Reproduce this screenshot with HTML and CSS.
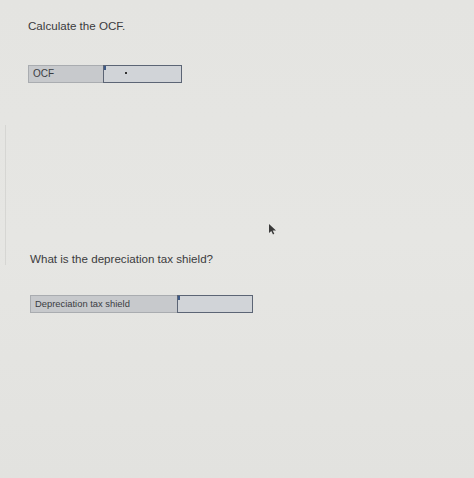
FILE: index.html
```html
<!DOCTYPE html>
<html>
<head>
<meta charset="utf-8">
<link rel="stylesheet" href="styles.css">
</head>
<body>
<div class="page">
  <div class="edge"></div>
  <section class="q q1">
    <p class="prompt">Calculate the OCF.</p>
    <div class="row row1">
      <div class="label">OCF</div>
      <div class="input"><span class="caret"></span><span class="dot"></span></div>
    </div>
  </section>
  <section class="q q2">
    <p class="prompt">What is the depreciation tax shield?</p>
    <div class="row row2">
      <div class="label">Depreciation tax shield</div>
      <div class="input"><span class="caret"></span></div>
    </div>
  </section>
  <svg class="cursor" width="8" height="11" viewBox="0 0 8 11"><path d="M0 0 L0 9 L2.3 7 L4 10.5 L5.3 9.8 L3.7 6.6 L7 6.4 Z" fill="#3a3a3a"/></svg>
</div>
</body>
</html>
```
FILE: styles.css
```css
html, body { margin: 0; padding: 0; }
body {
  width: 474px; height: 478px; overflow: hidden;
  font-family: "Liberation Sans", Arial, sans-serif;
  color: #3b3b3d;
}
.page {
  position: relative;
  width: 474px; height: 478px;
  background: linear-gradient(180deg, #e4e4e1 0%, #e6e6e3 50%, #e2e2df 100%);
  display: flex; flex-direction: column;
}
.edge {
  position: absolute; left: 5px; top: 125px; width: 1px; height: 140px;
  background: #d6d6d3;
}
.prompt { margin: 0; font-size: 11.6px; line-height: 14px; }
.q1 { padding: 19px 0 0 28px; }
.q2 { padding: 0 0 0 30px; margin-top: 169px; }
.row { display: flex; height: 18px; }
.row1 { margin-top: 32px; width: 154px; }
.row2 { margin-top: 29px; width: 223px; }
.label {
  box-sizing: border-box;
  background: #c7c9cc;
  border: 1px solid #a9acb0;
  border-right: none;
  font-size: 10px; line-height: 16px;
  padding-left: 4px;
  color: #3a3c42;
}
.row1 .label { width: 75px; }
.row2 .label { width: 147px; font-size: 9.4px; }
.input {
  position: relative;
  flex: 1;
  box-sizing: border-box;
  background: #d1d4d8;
  border: 1.5px solid #5c6575;
}
.caret {
  position: absolute; left: 0; top: 0; width: 2px; height: 4px;
  background: #3e5a86;
}
.dot {
  position: absolute; left: 21px; top: 6px; width: 2px; height: 2px;
  background: #333;
}
.cursor { position: absolute; left: 269px; top: 224px; }
```
